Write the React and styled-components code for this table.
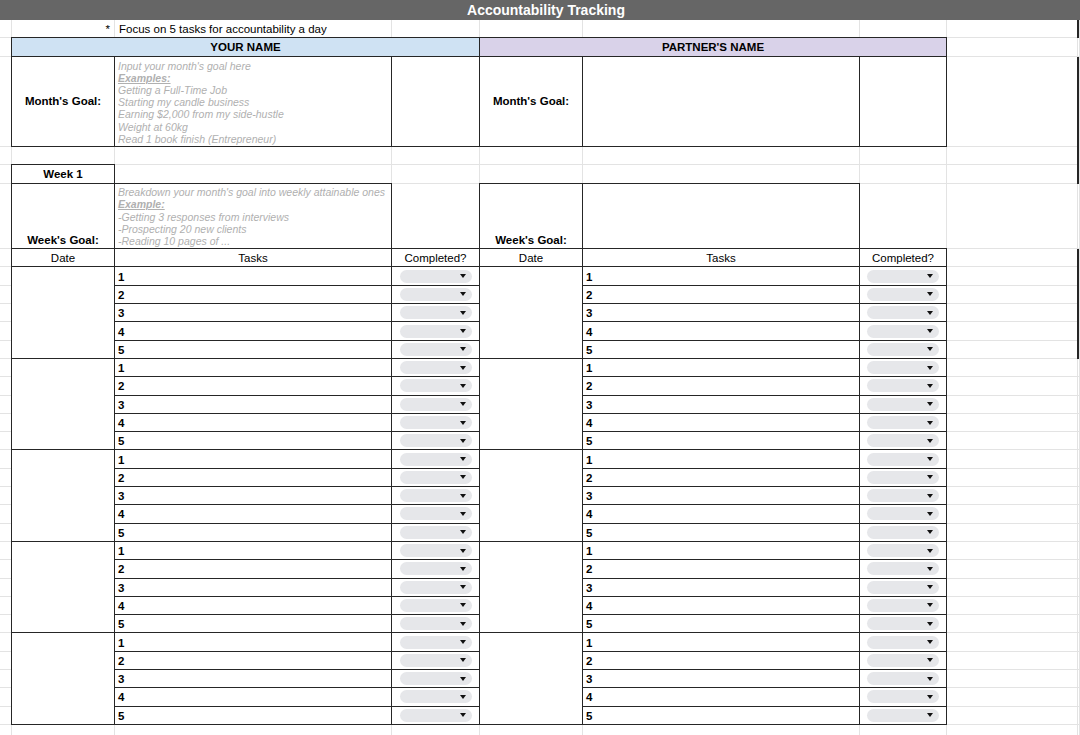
import React from 'react'
import styled, { createGlobalStyle, css } from 'styled-components'

const GlobalStyle = createGlobalStyle`
  html, body {
    margin: 0;
    padding: 0;
    background: #ffffff;
    overflow: hidden;
  }
  body {
    font-family: "Liberation Sans", Arial, sans-serif;
    color: #000000;
  }
`

const COLUMNS = [12, 103, 277, 88, 103, 277, 87, 131]
const ROW = 18.3
const ROWS = [20, ROW, ROW, 90.5, ROW, ROW, 65.5, ROW]
  .concat(Array.from({ length: 25 }, () => ROW))
  .concat([ROW])

const Sheet = styled.div`
  width: 1080px;
  display: grid;
  grid-template-columns: ${COLUMNS.map((w) => w + 'px').join(' ')} 1fr;
  grid-template-rows: ${ROWS.map((h) => h + 'px').join(' ')};
  font-size: 11.5px;
`

const placed = css`
  grid-row: ${(p) => p.$row} / span ${(p) => p.$rows || 1};
  grid-column: ${(p) => p.$col} / span ${(p) => p.$cols || 1};
  min-width: 0;
  min-height: 0;
`

const ruled = css`
  ${placed}
  border: 1px solid #262626;
  margin: -1px 0 0 -1px;
  background: #ffffff;
  box-sizing: border-box;
`

const GridCell = styled.div`
  ${placed}
  border-right: 1px solid #e3e3e3;
  border-bottom: 1px solid #e3e3e3;
`

const TitleBar = styled.div`
  ${placed}
  background: #666666;
  color: #ffffff;
  font-weight: bold;
  font-size: 14px;
  display: flex;
  align-items: center;
  justify-content: center;
  padding-left: 12px;
`

const NoteText = styled.div`
  ${placed}
  display: flex;
  align-items: center;
  justify-content: ${(p) => (p.$end ? 'flex-end' : 'flex-start')};
  padding: ${(p) => (p.$end ? '0 5px 0 0' : '0 0 0 4px')};
  white-space: nowrap;
`

const NameHeader = styled.div`
  ${ruled}
  background: ${(p) => (p.$tone === 'purple' ? '#d9d2e9' : '#cfe2f3')};
  font-weight: bold;
  display: flex;
  align-items: center;
  justify-content: center;
  padding-top: 1px;
`

const Label = styled.div`
  ${ruled}
  font-weight: bold;
  display: flex;
  justify-content: center;
  align-items: ${(p) => (p.$bottom ? 'flex-end' : 'center')};
  padding-bottom: ${(p) => (p.$bottom ? '2px' : '0')};
`

const BoxCell = styled.div`
  ${ruled}
`

const HintBox = styled.div`
  ${ruled}
  display: flex;
  flex-direction: column;
  justify-content: flex-end;
  padding: 0 3px 1px;
  font-size: 10.5px;
  line-height: 12.2px;
  font-style: italic;
  color: #b0b0b0;
  white-space: nowrap;
  overflow: hidden;
`

const HintLine = styled.div`
  ${(p) =>
    p.$strong &&
    css`
      font-weight: bold;
      text-decoration: underline;
    `}
`

const ColumnHead = styled.div`
  ${ruled}
  display: flex;
  align-items: center;
  justify-content: center;
  padding-top: 1px;
`

const DateCell = styled.div`
  ${ruled}
`

const TaskCell = styled.div`
  ${ruled}
  font-weight: bold;
  display: flex;
  align-items: center;
  padding: 1px 0 0 3px;
`

const StatusCell = styled.div`
  ${ruled}
  display: flex;
  align-items: center;
  justify-content: center;
`

const Chip = styled.div`
  width: 72px;
  height: 13px;
  border-radius: 7px;
  background: #e6e7ea;
  display: flex;
  align-items: center;
  justify-content: flex-end;
  padding-right: 6px;
  box-sizing: border-box;

  &::after {
    content: '';
    border-left: 3.5px solid transparent;
    border-right: 3.5px solid transparent;
    border-top: 4px solid #111111;
  }
`

const EdgeMark = styled.div`
  ${placed}
  border-left: 2px solid #262626;
  margin-left: -1px;
`

const monthHints = [
  { text: "Input your month's goal here" },
  { text: 'Examples:', strong: true },
  { text: 'Getting a Full-Time Job' },
  { text: 'Starting my candle business' },
  { text: 'Earning $2,000 from my side-hustle' },
  { text: 'Weight at 60kg' },
  { text: 'Read 1 book finish (Entrepreneur)' }
]

const weekHints = [
  { text: "Breakdown your month's goal into weekly attainable ones" },
  { text: 'Example:', strong: true },
  { text: '-Getting 3 responses from interviews' },
  { text: '-Prospecting 20 new clients' },
  { text: '-Reading 10 pages of ...' }
]

const sides = [
  { start: 2, name: 'YOUR NAME', tone: 'blue', hints: true },
  { start: 5, name: "PARTNER'S NAME", tone: 'purple', hints: false }
]

const FIRST_TASK_ROW = 9

function renderHints(list, row, col) {
  return (
    <HintBox $row={row} $col={col}>
      {list.map((line, i) => (
        <HintLine key={i} $strong={line.strong}>
          {line.text}
        </HintLine>
      ))}
    </HintBox>
  )
}

function renderSide(side) {
  const c = side.start
  const groups = [0, 1, 2, 3, 4]
  return (
    <React.Fragment key={side.name}>
      <NameHeader $row={3} $col={c} $cols={3} $tone={side.tone}>
        {side.name}
      </NameHeader>

      <Label $row={4} $col={c}>Month's Goal:</Label>
      {side.hints ? renderHints(monthHints, 4, c + 1) : <BoxCell $row={4} $col={c + 1} />}
      <BoxCell $row={4} $col={c + 2} />

      {side.hints && <Label $row={6} $col={c}>Week 1</Label>}
      <Label $row={7} $col={c} $bottom>
        Week's Goal:
      </Label>
      {side.hints ? renderHints(weekHints, 7, c + 1) : <BoxCell $row={7} $col={c + 1} />}

      <ColumnHead $row={8} $col={c}>Date</ColumnHead>
      <ColumnHead $row={8} $col={c + 1}>Tasks</ColumnHead>
      <ColumnHead $row={8} $col={c + 2}>Completed?</ColumnHead>

      {groups.map((g) => (
        <React.Fragment key={g}>
          <DateCell $row={FIRST_TASK_ROW + g * 5} $rows={5} $col={c} />
          {[1, 2, 3, 4, 5].map((n) => {
            const row = FIRST_TASK_ROW + g * 5 + n - 1
            return (
              <React.Fragment key={n}>
                <TaskCell $row={row} $col={c + 1}>{n}</TaskCell>
                <StatusCell $row={row} $col={c + 2}>
                  <Chip />
                </StatusCell>
              </React.Fragment>
            )
          })}
        </React.Fragment>
      ))}
    </React.Fragment>
  )
}

export default function App() {
  const base = []
  ROWS.forEach((_, r) => {
    for (let c = 1; c <= COLUMNS.length + 1; c++) {
      base.push(<GridCell key={r + '-' + c} $row={r + 1} $col={c} />)
    }
  })

  return (
    <>
      <GlobalStyle />
      <Sheet>
        {base}
        <TitleBar $row={1} $col={1} $cols={9}>
          Accountability Tracking
        </TitleBar>
        <NoteText $row={2} $col={2} $end>
          *
        </NoteText>
        <NoteText $row={2} $col={3}>
          Focus on 5 tasks for accountability a day
        </NoteText>

        {sides.map(renderSide)}

        <EdgeMark $row={2} $col={9} />
        <EdgeMark $row={4} $rows={3} $col={9} />
        <EdgeMark $row={8} $rows={6} $col={9} />
      </Sheet>
    </>
  )
}
